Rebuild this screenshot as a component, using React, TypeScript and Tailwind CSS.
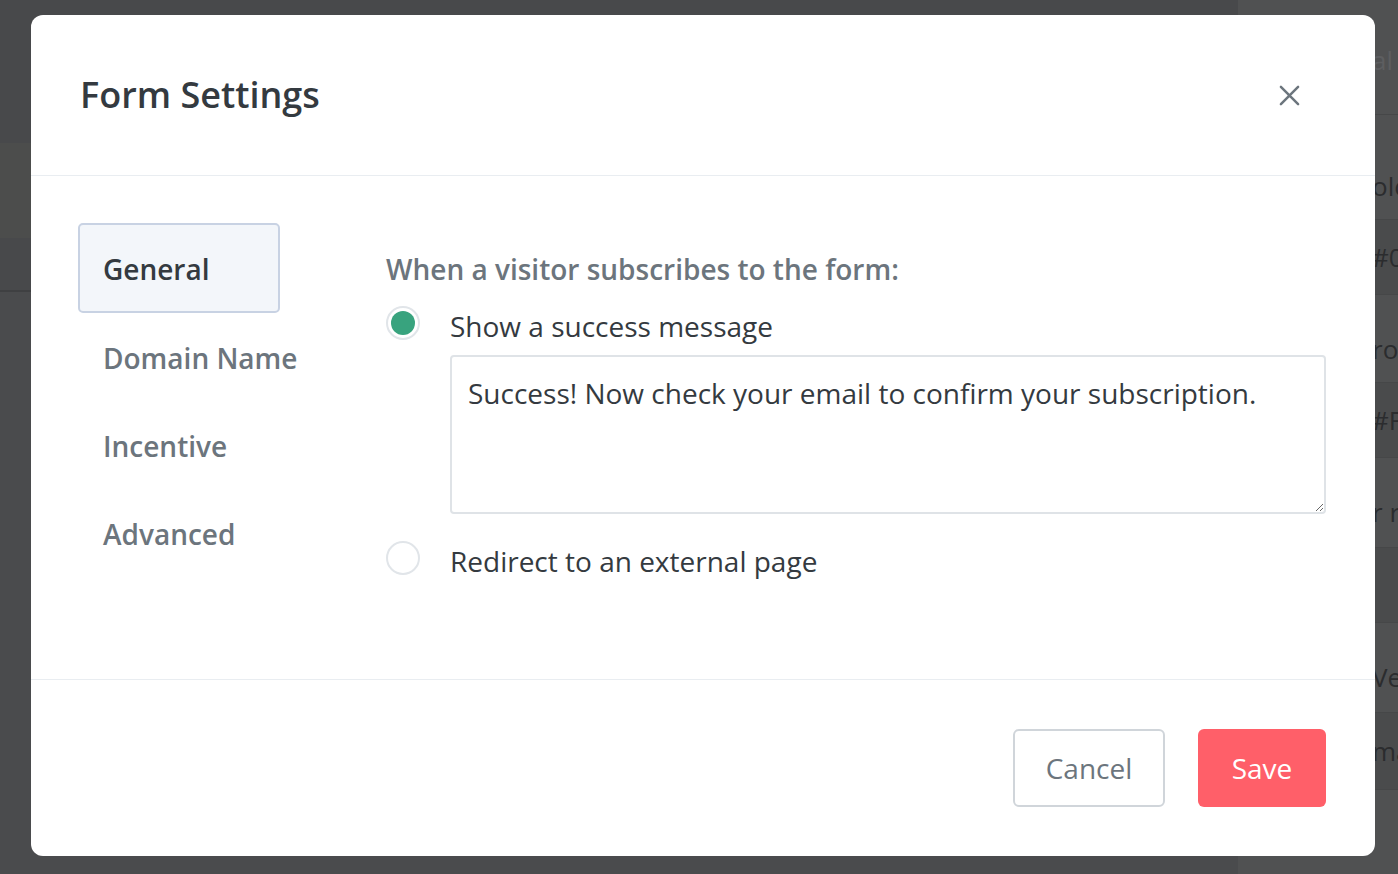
import { useState } from "react";

const sideRows = [
  { h: "h-[115px]", text: "al", cls: "items-center pt-[6px] text-[#5d5e60]", dark: false },
  { h: "h-[105px]", text: "olor", cls: "items-end pb-[20px] text-[#2b2c2e]", dark: false },
  { h: "h-[75px]", text: "#000000", cls: "items-center text-[#2b2c2e]", dark: true },
  { h: "h-[88px]", text: "round", cls: "items-end pb-[20px] text-[#2b2c2e]", dark: false },
  { h: "h-[75px]", text: "#FFFFFF", cls: "items-center text-[#2b2c2e]", dark: true },
  { h: "h-[90px]", text: "r radius", cls: "items-end pb-[22px] text-[#2b2c2e]", dark: false },
  { h: "h-[75px]", text: "", cls: "items-center text-[#2b2c2e]", dark: true },
  { h: "h-[90px]", text: "Verify", cls: "items-end pb-[22px] text-[#2b2c2e]", dark: false },
  { h: "h-[77px]", text: "max", cls: "items-center text-[#2b2c2e]", dark: true },
];

const navItems = ["General", "Domain Name", "Incentive", "Advanced"];

function Radio({ checked }: { checked: boolean }) {
  return (
    <span className="flex h-[34px] w-[34px] shrink-0 items-center justify-center rounded-full border-2 border-[#e1e5e9] bg-white">
      {checked && <span className="h-[24px] w-[24px] rounded-full bg-[#38a37e]" />}
    </span>
  );
}

export default function App() {
  const [active, setActive] = useState("General");
  const [mode, setMode] = useState<"message" | "redirect">("message");

  return (
    <div className="relative h-[874px] w-[1398px] overflow-hidden bg-[#4a4b4d] font-['Open_Sans',sans-serif]">
      {/* dimmed page behind the modal */}
      <div className="flex h-full">
        <div className="flex flex-1 flex-col">
          <div className="h-[143px] bg-[#48494b]" />
          <div className="h-[95px] bg-[#4c4d4c]" />
          <div className="h-[54px] border-b-2 border-[#3f4042] bg-[#48494b]" />
          <div className="flex-1 bg-[#4a4b4d]" />
        </div>
        <div className="flex w-[160px] flex-col bg-[#505152]">
          {sideRows.map((row, i) => (
            <div
              key={i}
              className={`flex ${row.h} ${row.cls} border-b border-[#464748] pl-[134px] text-[26px] leading-none whitespace-nowrap ${row.dark ? "bg-[#4a4b4c]" : ""}`}
            >
              {row.text}
            </div>
          ))}
        </div>
      </div>

      {/* modal */}
      <div className="absolute left-[31px] top-[15px] flex h-[841px] w-[1344px] flex-col rounded-[12px] bg-white">
        <div className="flex h-[161px] shrink-0 items-center justify-between border-b border-[#e9edf1] pl-[49px] pr-[71px]">
          <h1 className="text-[36px] font-semibold leading-none text-[#343a40]">Form Settings</h1>
          <button className="flex h-[30px] w-[30px] items-center justify-center">
            <svg width="21" height="21" viewBox="0 0 22 22" fill="none" stroke="#6c757d" strokeWidth="2.6" strokeLinecap="round">
              <path d="M2 2L20 20M20 2L2 20" />
            </svg>
          </button>
        </div>

        <div className="flex flex-1 border-b border-[#e9edf1] pl-[47px] pr-[49px] pt-[47px]">
          <nav className="flex w-[202px] shrink-0 flex-col">
            {navItems.map((item) => (
              <button
                key={item}
                onClick={() => setActive(item)}
                className={`flex h-[88px] items-center whitespace-nowrap rounded-[5px] border-2 pl-[23px] pt-[2px] text-left text-[28px] font-semibold ${
                  active === item
                    ? "h-[90px] border-[#c8d2e3] bg-[#f3f6fa] text-[#343a40]"
                    : "border-transparent text-[#6c757d]"
                }`}
              >
                {item}
              </button>
            ))}
          </nav>

          <div className="ml-[106px] flex flex-1 flex-col pt-[28px]">
            <p className="text-[28px] font-semibold leading-[36px] text-[#6c757d]">When a visitor subscribes to the form:</p>

            <label className="mt-[18px] flex h-[36px] items-center gap-[30px]" onClick={() => setMode("message")}>
              <Radio checked={mode === "message"} />
              <span className="pt-[6px] text-[28px] leading-[36px] text-[#343a40]">Show a success message</span>
            </label>

            <textarea
              defaultValue="Success! Now check your email to confirm your subscription."
              className="ml-[64px] mt-[14px] h-[159px] rounded-[4px] border-2 border-[#dfe3e7] px-[16px] pt-[18px] text-[28px] leading-[36px] text-[#343a40] outline-none"
            />

            <label className="mt-[26px] flex h-[36px] items-center gap-[30px]" onClick={() => setMode("redirect")}>
              <Radio checked={mode === "redirect"} />
              <span className="pt-[6px] text-[28px] leading-[36px] text-[#343a40]">Redirect to an external page</span>
            </label>
          </div>
        </div>

        <div className="flex h-[176px] shrink-0 items-center justify-end gap-[33px] pr-[49px]">
          <button className="h-[78px] w-[152px] rounded-[6px] border-2 border-[#d0d5da] text-[28px] text-[#6c757d]">Cancel</button>
          <button className="h-[78px] w-[128px] rounded-[6px] bg-[#ff5f69] text-[28px] text-white">Save</button>
        </div>
      </div>
    </div>
  );
}
